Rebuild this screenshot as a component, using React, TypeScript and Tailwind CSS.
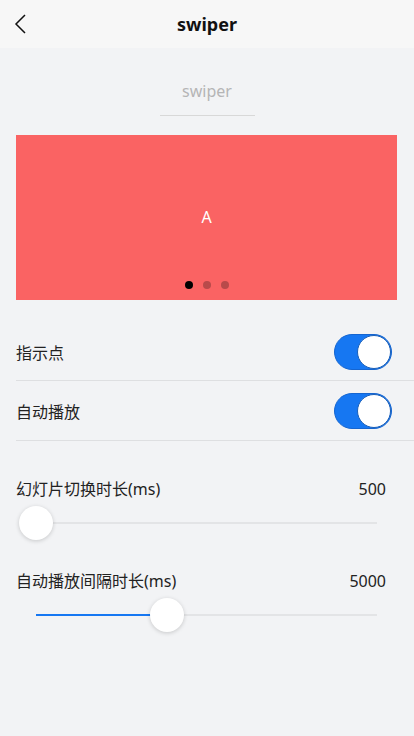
import React from "react";

const font = { fontFamily: '"Noto Sans", "Noto Sans CJK SC", sans-serif' };

function Switch() {
  return (
    <div className="relative h-[36px] w-[58px] rounded-full bg-[#1677f2] border border-[#1565d0]">
      <div className="absolute right-[0px] top-[0px] h-[34px] w-[34px] rounded-full bg-white border border-[#1a5fb8]" />
    </div>
  );
}

function Slider({ pct }: { pct: number }) {
  return (
    <div className="relative h-[34px] mx-[20px] mr-[37px]">
      <div className="absolute left-[16px] right-0 top-[16px] h-[2px] bg-[#e3e4e6]" />
      <div
        className="absolute left-[16px] top-[16px] h-[2px] bg-[#1677f2]"
        style={{ width: `${pct}px` }}
      />
      <div
        className="absolute top-0 h-[34px] w-[34px] rounded-full bg-white shadow-[0_1px_4px_rgba(0,0,0,0.18)]"
        style={{ left: `${pct - 1}px` }}
      />
    </div>
  );
}

export default function App() {
  return (
    <div className="min-h-[736px] w-[414px] bg-[#f2f3f5]" style={font}>
      <div className="relative flex h-[48px] items-center justify-center bg-[#f7f7f7]">
        <svg
          className="absolute left-[14px] top-[14px]"
          width="14"
          height="20"
          viewBox="0 0 14 20"
          fill="none"
          stroke="#111"
          strokeWidth="1.5"
        >
          <path d="M11 1 L2 10 L11 19" />
        </svg>
        <span className="text-[18px] font-bold text-[#111]">swiper</span>
      </div>

      <div className="flex justify-center pt-[31px]">
        <div className="w-[95px] border-b border-[#d8d8d8] pb-[12px] text-center text-[16px] text-[#b5b5b5]">
          swiper
        </div>
      </div>

      <div className="mx-[16px] mt-[19px] flex h-[165px] w-[381px] flex-col items-center bg-[#fa6363]">
        <div className="mt-[70px] text-[16px] text-white">A</div>
        <div className="mt-[52px] flex gap-[10px]">
          <div className="h-[8px] w-[8px] rounded-full bg-black" />
          <div className="h-[8px] w-[8px] rounded-full bg-[#b84a4a]" />
          <div className="h-[8px] w-[8px] rounded-full bg-[#b84a4a]" />
        </div>
      </div>

      <div className="mt-[34px] pl-[16px]">
        <div className="flex h-[47px] items-start justify-between border-b border-[#dedfe1] pr-[22px]">
          <span className="mt-[7px] text-[16px] text-[#222]">指示点</span>
          <Switch />
        </div>
        <div className="flex h-[60px] items-center justify-between border-b border-[#dedfe1] pr-[22px]">
          <span className="mt-[2px] text-[16px] text-[#222]">自动播放</span>
          <Switch />
        </div>
      </div>

      <div className="mt-[36px] flex items-center justify-between px-[16px] pr-[28px] text-[16px] text-[#222]">
        <span>幻灯片切换时长(ms)</span>
        <span>500</span>
      </div>
      <div className="mt-[5px]">
        <Slider pct={0} />
      </div>

      <div className="mt-[29px] flex items-center justify-between px-[16px] pr-[28px] text-[16px] text-[#222]">
        <span>自动播放间隔时长(ms)</span>
        <span>5000</span>
      </div>
      <div className="mt-[5px]">
        <Slider pct={131} />
      </div>
    </div>
  );
}
